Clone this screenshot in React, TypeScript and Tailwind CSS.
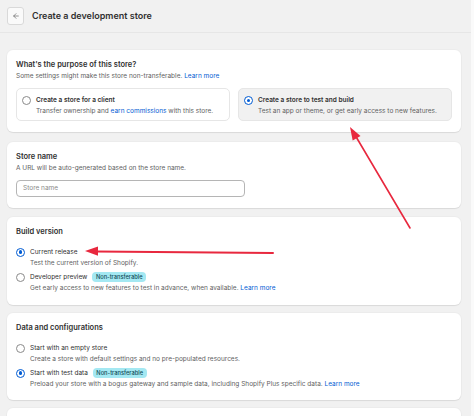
import { ArrowLeft } from 'lucide-react'

function Radio({ checked }: { checked?: boolean }) {
  return checked ? (
    <span className="w-[9px] h-[9px] shrink-0 rounded-full border-[1.5px] border-[#005bd3] flex items-center justify-center bg-white">
      <span className="w-[3.5px] h-[3.5px] rounded-full bg-[#005bd3]" />
    </span>
  ) : (
    <span className="w-[9px] h-[9px] shrink-0 rounded-full border border-[#8a8a8a] bg-white" />
  )
}

function Badge({ children }: { children: string }) {
  return (
    <span className="h-[10px] px-[3.5px] rounded-[4px] bg-[#a4e8f2] text-[#0f4c57] text-[5.7px] leading-[10px] font-medium">
      {children}
    </span>
  )
}

function Link({ children }: { children: string }) {
  return <span className="text-[#005bd3]">{children}</span>
}

function Card({
  title,
  className = '',
  children,
}: {
  title: string
  className?: string
  children: React.ReactNode
}) {
  return (
    <section
      className={`bg-white rounded-[6px] shadow-[0_1px_1px_rgba(0,0,0,0.08),0_0_0_1px_rgba(0,0,0,0.02)] px-[9px] pt-[10px] ${className}`}
    >
      <h2 className="text-[7.5px] leading-[10px] font-semibold text-[#303030]">{title}</h2>
      {children}
    </section>
  )
}

function Choice({
  checked,
  label,
  badge,
  desc,
}: {
  checked?: boolean
  label: string
  badge?: boolean
  desc: React.ReactNode
}) {
  return (
    <div className="flex flex-col gap-[2px]">
      <div className="flex items-center gap-[5px] h-[10px]">
        <Radio checked={checked} />
        <span className="text-[6.5px] leading-[9px] text-[#303030]">{label}</span>
        {badge && <Badge>Non-transferable</Badge>}
      </div>
      <p className="pl-[14px] text-[6.5px] leading-[9px] text-[#616161]">{desc}</p>
    </div>
  )
}

export default function App() {
  return (
    <div
      className="w-[474px] h-[416px] overflow-hidden bg-[#f1f1f1] relative flex"
      style={{ fontFamily: 'Inter, "Noto Sans", sans-serif' }}
    >
      <div className="flex-1 flex flex-col">
        {/* Header */}
        <header className="h-[33px] shrink-0 flex items-center gap-[8px] px-[7px] border-b border-[#e6e6e6]">
          <button className="w-[17px] h-[18px] rounded-[3px] border border-[#d9d9d9] bg-[#fafafa] flex items-center justify-center">
            <ArrowLeft size={8} strokeWidth={2} className="text-[#616161]" />
          </button>
          <h1 className="text-[9px] font-semibold text-[#303030]">Create a development store</h1>
        </header>

        {/* Cards */}
        <main className="pl-[7px] pr-[10px] pt-[17px] flex flex-col gap-[9px]">
          <Card title="What's the purpose of this store?" className="pb-[11px]">
            <p className="mt-[2px] text-[6.5px] leading-[9px] text-[#616161]">
              Some settings might make this store non-transferable. <Link>Learn more</Link>
            </p>
            <div className="mt-[7px] grid grid-cols-2 gap-[8px]">
              <div className="h-[33px] rounded-[5px] border border-[#e6e6e6] px-[5px] pt-[7px] flex flex-col gap-[2px]">
                <div className="flex items-center gap-[5px] h-[9px]">
                  <Radio />
                  <span className="text-[6.5px] leading-[9px] font-semibold text-[#303030]">
                    Create a store for a client
                  </span>
                </div>
                <p className="pl-[14px] text-[6.5px] leading-[9px] text-[#616161]">
                  Transfer ownership and <Link>earn commissions</Link> with this store.
                </p>
              </div>
              <div className="h-[33px] rounded-[5px] border border-[#e6e6e6] bg-[#f1f1f1] px-[5px] pt-[7px] flex flex-col gap-[2px]">
                <div className="flex items-center gap-[5px] h-[9px]">
                  <Radio checked />
                  <span className="text-[6.5px] leading-[9px] font-semibold text-[#303030]">
                    Create a store to test and build
                  </span>
                </div>
                <p className="pl-[14px] text-[6.5px] leading-[9px] text-[#616161]">
                  Test an app or theme, or get early access to new features.
                </p>
              </div>
            </div>
          </Card>

          <Card title="Store name" className="mt-[1px] pb-[11px]">
            <p className="mt-[2px] text-[6.5px] leading-[9px] text-[#616161]">
              A URL will be auto-generated based on the store name.
            </p>
            <div className="mt-[7px] w-[229px] h-[17px] rounded-[4px] border border-[#b5b5b5] px-[6px] flex items-center">
              <span className="text-[6.5px] text-[#8a8a8a]">Store name</span>
            </div>
          </Card>

          <Card title="Build version" className="pb-[12px]">
            <div className="mt-[10px] flex flex-col gap-[4px]">
              <Choice checked label="Current release" desc="Test the current version of Shopify." />
              <Choice
                label="Developer preview"
                badge
                desc={
                  <>
                    Get early access to new features to test in advance, when available. <Link>Learn more</Link>
                  </>
                }
              />
            </div>
          </Card>

          <Card title="Data and configurations" className="-mt-[1px] pb-[11px]">
            <div className="mt-[10px] flex flex-col gap-[4px]">
              <Choice
                label="Start with an empty store"
                desc="Create a store with default settings and no pre-populated resources."
              />
              <Choice
                checked
                label="Start with test data"
                badge
                desc={
                  <>
                    Preload your store with a bogus gateway and sample data, including Shopify Plus specific data.{' '}
                    <Link>Learn more</Link>
                  </>
                }
              />
            </div>
          </Card>

          <section className="-mt-[1px] h-[20px] bg-white rounded-[6px] shadow-[0_1px_1px_rgba(0,0,0,0.08),0_0_0_1px_rgba(0,0,0,0.02)]" />
        </main>
      </div>
      <div className="w-[3px] bg-[#fafafa]" />

      {/* Annotation arrows */}
      <svg className="absolute inset-0 pointer-events-none" width="474" height="416" viewBox="0 0 474 416">
        <line x1="410" y1="228" x2="355" y2="135" stroke="#e8283e" strokeWidth="1.6" strokeLinecap="round" />
        <polygon points="350,127 360.5,135.9 352.7,140.5" fill="#e8283e" />
        <line x1="273" y1="253" x2="96" y2="251.5" stroke="#e8283e" strokeWidth="2" strokeLinecap="round" />
        <polygon points="85,251 98,246.5 98,255.8" fill="#e8283e" />
      </svg>
    </div>
  )
}
